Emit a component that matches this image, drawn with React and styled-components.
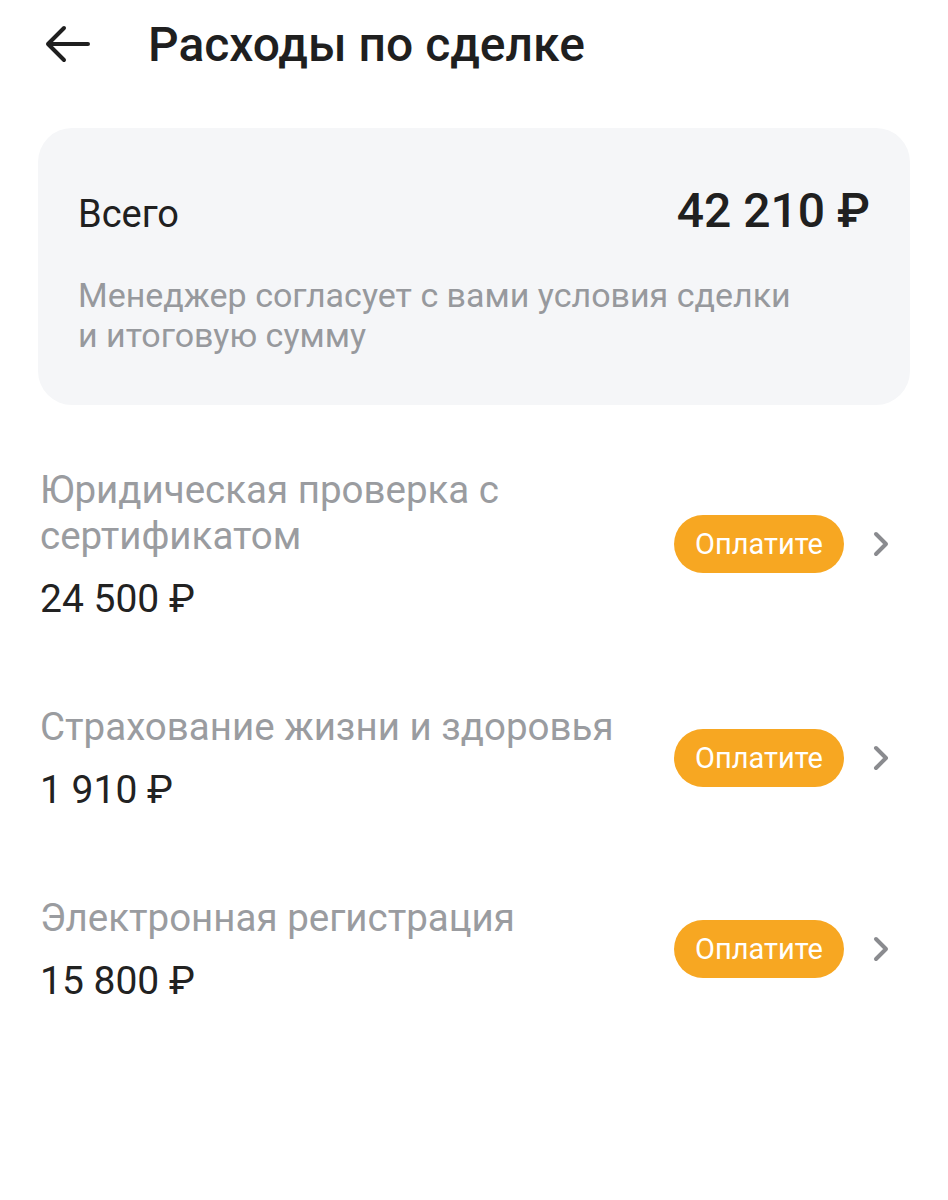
import React from 'react';
import styled, { createGlobalStyle } from 'styled-components';

const GlobalStyle = createGlobalStyle`
  body {
    margin: 0;
    background: #ffffff;
    font-family: Roboto, 'Noto Sans', sans-serif;
  }
`;

const Page = styled.div`
  width: 948px;
  min-height: 1200px;
  background: #fff;
`;

const Header = styled.div`
  display: flex;
  align-items: center;
  gap: 56px;
  padding: 16px 0 0 44px;
  height: 56px;
`;

const BackButton = styled.button`
  display: flex;
  align-items: center;
  justify-content: center;
  width: 48px;
  height: 48px;
  padding: 0;
  border: none;
  background: none;
  color: #1f1f1f;
`;

const Title = styled.h1`
  margin: 0;
  font-size: 48px;
  font-weight: 500;
  color: #1f1f1f;
`;

const Card = styled.div`
  margin: 56px 38px 0;
  padding: 54px 40px 50px;
  background: #f5f6f8;
  border-radius: 34px;
`;

const TotalRow = styled.div`
  display: flex;
  justify-content: space-between;
  align-items: baseline;
`;

const TotalLabel = styled.span`
  font-size: 38px;
  color: #202020;
`;

const TotalValue = styled.span`
  font-size: 48px;
  font-weight: 500;
  color: #202020;
`;

const Note = styled.p`
  margin: 36px 0 0;
  font-size: 34px;
  line-height: 40px;
  color: #97999d;
`;

const List = styled.div`
  display: flex;
  flex-direction: column;
  gap: 84px;
  padding: 62px 58px 0 40px;
`;

const Item = styled.div`
  display: flex;
  align-items: center;
  gap: 16px;
`;

const ItemText = styled.div`
  flex: 1;
`;

const ItemTitle = styled.div`
  font-size: 38.5px;
  line-height: 46px;
  color: #9a9ca0;
`;

const ItemAmount = styled.div`
  margin-top: 19px;
  font-size: 39px;
  line-height: 42px;
  color: #222;
`;

const PayButton = styled.button`
  flex-shrink: 0;
  height: 58px;
  padding: 0 21px;
  border: none;
  border-radius: 29px;
  background: #f7a722;
  color: #fff;
  font-family: Roboto, sans-serif;
  font-size: 29px;
  font-weight: 400;
`;

const Chevron = styled.span`
  display: flex;
  margin-left: 12px;
  color: #8a8b8f;
`;

const items = [
  { title: 'Юридическая проверка с сертификатом', amount: '24 500 ₽' },
  { title: 'Страхование жизни и здоровья', amount: '1 910 ₽' },
  { title: 'Электронная регистрация', amount: '15 800 ₽' },
];

function App() {
  return (
    <Page>
      <GlobalStyle />
      <Header>
        <BackButton>
          <svg width="48" height="40" viewBox="0 0 48 40" fill="none">
            <path d="M44 20H4M20 4L4 20l16 16" stroke="currentColor" strokeWidth="4" strokeLinecap="round" strokeLinejoin="round" />
          </svg>
        </BackButton>
        <Title>Расходы по сделке</Title>
      </Header>
      <Card>
        <TotalRow>
          <TotalLabel>Всего</TotalLabel>
          <TotalValue>42 210 ₽</TotalValue>
        </TotalRow>
        <Note>
          Менеджер согласует с вами условия сделки
          <br />
          и итоговую сумму
        </Note>
      </Card>
      <List>
        {items.map((it) => (
          <Item key={it.title}>
            <ItemText>
              <ItemTitle>{it.title}</ItemTitle>
              <ItemAmount>{it.amount}</ItemAmount>
            </ItemText>
            <PayButton>Оплатите</PayButton>
            <Chevron>
              <svg width="18" height="26" viewBox="0 0 18 26" fill="none">
                <path d="M4 3l10 10L4 23" stroke="currentColor" strokeWidth="4" strokeLinecap="round" strokeLinejoin="round" />
              </svg>
            </Chevron>
          </Item>
        ))}
      </List>
    </Page>
  );
}

export default App;
